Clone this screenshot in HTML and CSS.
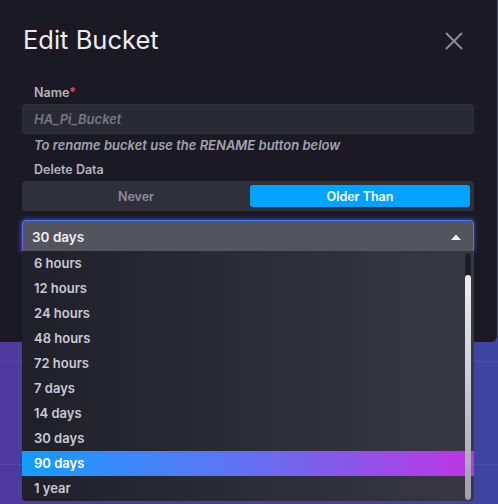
FILE: index.html
```html
<!DOCTYPE html>
<html>
<head>
<meta charset="utf-8">
<link rel="stylesheet" href="styles.css">
</head>
<body>
<div class="page">
  <div class="modal">
    <div class="header">
      <h1 class="title">Edit Bucket</h1>
      <svg class="close" width="18" height="18" viewBox="0 0 18 18"><path d="M1.5 1.5 L16.5 16.5 M16.5 1.5 L1.5 16.5" stroke="#8b8b9a" stroke-width="2" stroke-linecap="round"/></svg>
    </div>
    <div class="form">
      <div class="label">Name<span class="req">*</span></div>
      <div class="input">HA_Pi_Bucket</div>
      <div class="help">To rename bucket use the RENAME button below</div>
      <div class="label label-gap">Delete Data</div>
      <div class="toggle">
        <div class="opt">Never</div>
        <div class="opt active">Older Than</div>
      </div>
      <div class="select">
        <span>30 days</span>
        <svg width="10" height="6" viewBox="0 0 10 6"><path d="M0 6 L5 0.5 L10 6 Z" fill="#f2f2f6"/></svg>
      </div>
    </div>
  </div>
  <div class="rows">
    <div class="row"></div>
    <div class="row"></div>
  </div>
  <div class="menu">
    <div class="item">6 hours</div>
    <div class="item">12 hours</div>
    <div class="item">24 hours</div>
    <div class="item">48 hours</div>
    <div class="item">72 hours</div>
    <div class="item">7 days</div>
    <div class="item">14 days</div>
    <div class="item">30 days</div>
    <div class="item selected">90 days</div>
    <div class="item">1 year</div>
    <div class="track"><div class="thumb"></div></div>
  </div>
</div>
</body>
</html>
```
FILE: styles.css
```css
* { box-sizing: border-box; }
html, body { margin: 0; padding: 0; }
body {
  width: 498px;
  height: 504px;
  overflow: hidden;
  font-family: Inter, Roboto, "Liberation Sans", sans-serif;
  background: linear-gradient(90deg, #4d3a9d 0%, #4540a0 55%, #3d46a1 100%);
}
.page { position: relative; width: 498px; height: 504px; }
.modal {
  width: 497px;
  height: 342px;
  background: #1b1a24;
  border-bottom-right-radius: 6px;
  padding-top: 24px;
}
.header {
  display: flex;
  justify-content: space-between;
  align-items: center;
  padding: 0 34px 0 23px;
  height: 32px;
}
.title {
  margin: 0;
  font-size: 25.5px;
  line-height: 32px;
  font-weight: 400;
  color: #ebebf2;
}
.close { margin-top: 2px; }
.form { padding: 0 23px 0 22px; margin-top: 28px; }
.label {
  font-size: 12.5px;
  line-height: 18px;
  font-weight: 600;
  color: #b4b4c2;
  padding-left: 12px;
}
.req { color: #e0525d; }
.label-gap { margin-top: 5px; }
.input {
  margin-top: 2px;
  height: 30px;
  background: #2a2a34;
  border: 1px solid #30303b;
  border-radius: 3px;
  padding-left: 11px;
  font-size: 13px;
  line-height: 28px;
  font-style: italic;
  font-weight: 600;
  color: #767688;
}
.help {
  font-size: 13px;
  line-height: 22px;
  font-style: italic;
  font-weight: 600;
  color: #a2a2b0;
  padding-left: 12px;
}
.toggle {
  margin-top: 2px;
  height: 30px;
  background: #30303b;
  border-radius: 4px;
  padding: 4px;
  display: flex;
  gap: 4px;
}
.opt {
  flex: 1;
  border-radius: 3px;
  font-size: 12.5px;
  font-weight: 600;
  color: #8c8c9c;
  display: flex;
  align-items: center;
  justify-content: center;
}
.opt.active { background: #00a3ff; color: #ffffff; }
.select {
  margin-top: 9px;
  height: 32px;
  border: 1.5px solid transparent;
  border-bottom: none;
  border-radius: 4px 4px 0 0;
  background: linear-gradient(#54545f, #54545f) padding-box,
              linear-gradient(180deg, #3f7cff 0%, #5a6aff 60%, #9a4cf0 100%) border-box;
  box-shadow: 0 -1px 5px rgba(70, 110, 255, 0.55), -1px 2px 5px rgba(140, 80, 255, 0.4);
  display: flex;
  align-items: center;
  justify-content: space-between;
  padding: 0 12px 0 9px;
  font-size: 13.5px;
  font-weight: 600;
  color: #eeeef4;
}
.rows { position: absolute; left: 0; top: 342px; width: 498px; }
.row { height: 103px; border-bottom: 1px solid rgba(255, 255, 255, 0.06); }
.row:first-child { height: 20px; }
.menu {
  position: absolute;
  left: 22px;
  top: 251px;
  width: 452px;
  height: 250px;
  border-radius: 0 0 4px 4px;
  overflow: hidden;
  background: linear-gradient(90deg, #20202a 0%, #2c2c37 50%, #383844 100%);
}
.item {
  height: 25px;
  line-height: 25px;
  padding-left: 12px;
  font-size: 13px;
  font-weight: 600;
  color: #c9c9d4;
}
.item.selected {
  color: #ffffff;
  background: linear-gradient(90deg, #119dff 0%, #3f86fb 25%, #6a6bf0 55%, #9a4ce8 80%, #bf34e2 100%);
}
.track {
  position: absolute;
  left: 443px;
  top: 2px;
  width: 6px;
  height: 247px;
  border-radius: 3px;
  background: #1d1d26;
}
.thumb {
  position: absolute;
  left: 0;
  top: 22px;
  width: 6px;
  bottom: 0;
  border-radius: 3px;
  background: linear-gradient(180deg, #ececf1 0%, #c9c9d2 50%, #9e9eab 100%);
}
```
